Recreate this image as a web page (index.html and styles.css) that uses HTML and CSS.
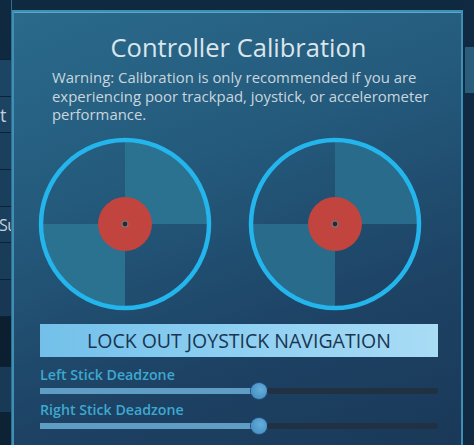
FILE: index.html
```html
<!DOCTYPE html>
<html>
<head>
<meta charset="utf-8">
<link rel="stylesheet" href="styles.css">
</head>
<body>
<div class="screen">
  <div class="side-left">
    <div class="band b0"></div>
    <div class="band b1"></div>
    <div class="band b2"><span class="end">t</span></div>
    <div class="band b3"></div>
    <div class="band b4"></div>
    <div class="band b5"><span class="start">Su</span></div>
    <div class="band b6"></div>
    <div class="band b7"></div>
    <div class="band b8"></div>
    <div class="band b9"></div>
    <div class="band b10"></div>
  </div>
  <div class="dialog">
    <h1 class="title">Controller Calibration</h1>
    <p class="warning">Warning: Calibration is only recommended if you are experiencing poor trackpad, joystick, or accelerometer performance.</p>
    <div class="sticks">
      <svg class="stick" width="176" height="176" viewBox="0 0 176 176">
        <defs><clipPath id="c1"><circle cx="88" cy="88" r="82"/></clipPath></defs>
        <g clip-path="url(#c1)">
          <rect x="88" y="0" width="88" height="88" fill="#2b7290"/>
          <rect x="0" y="88" width="88" height="88" fill="#2b7290"/>
        </g>
        <circle cx="88" cy="88" r="84" fill="none" stroke="#23b5ec" stroke-width="4.5"/>
        <circle cx="88" cy="88" r="27" fill="#c1443f"/>
        <circle cx="88" cy="88" r="3" fill="#2a2a2e" stroke="#7a7a80" stroke-width="1.2"/>
      </svg>
      <svg class="stick" width="176" height="176" viewBox="0 0 176 176">
        <defs><clipPath id="c2"><circle cx="88" cy="88" r="82"/></clipPath></defs>
        <g clip-path="url(#c2)">
          <rect x="88" y="0" width="88" height="88" fill="#286b8a"/>
          <rect x="0" y="88" width="88" height="88" fill="#286b8a"/>
        </g>
        <circle cx="88" cy="88" r="84" fill="none" stroke="#23b5ec" stroke-width="4.5"/>
        <circle cx="88" cy="88" r="27" fill="#c1443f"/>
        <circle cx="88" cy="88" r="3" fill="#2a2a2e" stroke="#7a7a80" stroke-width="1.2"/>
      </svg>
    </div>
    <button class="lock">LOCK OUT JOYSTICK NAVIGATION</button>
    <div class="label">Left Stick Deadzone</div>
    <div class="slider"><div class="fill" style="width:219px"></div><div class="knob"></div><div class="rest"></div></div>
    <div class="label second">Right Stick Deadzone</div>
    <div class="slider"><div class="fill" style="width:219px"></div><div class="knob"></div><div class="rest"></div></div>
  </div>
  <div class="side-right">
    <div class="rblock"></div>
  </div>
</div>
</body>
</html>
```

FILE: styles.css
```css
html, body {
  margin: 0;
  padding: 0;
}
body {
  width: 474px;
  height: 445px;
  overflow: hidden;
  background: #12304a;
  font-family: "Open Sans", "Noto Sans", sans-serif;
}
.screen {
  display: flex;
  width: 474px;
  height: 445px;
  background: linear-gradient(180deg, #0f2a40 0px, #13324d 445px);
}
.side-left {
  width: 12px;
  flex: none;
  display: flex;
  flex-direction: column;
  border-right: 1px solid #2f6f92;
  box-sizing: border-box;
  overflow: hidden;
}
.band {
  flex: none;
  box-sizing: border-box;
  border-bottom: 1px solid #0c2236;
  overflow: hidden;
  color: #c4d2dc;
  font-size: 16px;
  line-height: 36px;
  white-space: nowrap;
}
.b0 { height: 60px; background: #0f2a40; }
.b1 { height: 37px; background: #1c4563; }
.b2 { height: 36px; background: #1c4361; }
.b3 { height: 37px; background: #1a405d; }
.b4 { height: 37px; background: #1a3f5c; }
.b5 { height: 36px; background: #1a3e5b; }
.b6 { height: 37px; background: #193c58; }
.b7 { height: 37px; background: #173754; }
.b8 { height: 50px; background: #0b1f31; }
.b9 { height: 46px; background: #183a56; }
.b10 { height: 40px; background: #0d2235; }
.end { display: block; text-align: right; padding-right: 6px; font-size: 18px; }
.start { display: block; margin-left: -1px; letter-spacing: -0.5px; }

.dialog {
  flex: none;
  width: 451px;
  height: 445px;
  margin-top: 10px;
  box-sizing: border-box;
  border: 2px solid #3f8fb4;
  border-bottom: none;
  box-shadow: inset 0 1px 0 #5aa8c8;
  background: linear-gradient(160deg, #2a6a8b 0%, #245a7c 35%, #1d4264 70%, #1a3858 100%);
  padding: 0 24px 0 26px;
}
.title {
  margin: 18px 0 0;
  font-weight: 400;
  font-size: 25.5px;
  line-height: 34px;
  text-align: center;
  color: #dbe6ec;
}
.warning {
  margin: 4px -10px 0 0;
  padding-left: 12px;
  font-size: 14.9px;
  line-height: 18.5px;
  color: #c9d6de;
}
.sticks {
  display: flex;
  gap: 34px;
  margin-top: 12px;
  margin-left: -3px;
}
.stick { display: block; }
.lock {
  display: block;
  width: 398px;
  height: 33px;
  margin: 12px 0 0;
  border: none;
  padding: 0;
  background: linear-gradient(90deg, #72c0ea 0%, #8fd0f2 50%, #a9dcf5 100%);
  color: #1a3550;
  font-family: "Open Sans", "Noto Sans", sans-serif;
  font-size: 19.5px;
  text-align: center;
}
.label {
  margin-top: 9px;
  font-size: 14.2px;
  line-height: 17px;
  font-weight: 600;
  color: #3ea8d0;
}
.label.second { margin-top: 2px; }
.slider {
  display: flex;
  align-items: center;
  height: 16px;
  width: 398px;
}
.fill {
  height: 6px;
  background: #5f9dc4;
  flex: none;
}
.knob {
  flex: none;
  width: 16px;
  height: 16px;
  margin-left: -8px;
  border-radius: 50%;
  background: radial-gradient(circle at 60% 40%, #64aedb 0%, #4a94c6 70%, #3c80b0 100%);
  box-shadow: 0 0 0 1px #25507a;
}
.rest {
  flex: 1;
  height: 6px;
  background: #1f3142;
  border-radius: 3px;
}
.side-right {
  flex: 1;
  background: #112a44;
  padding-top: 47px;
  padding-left: 2px;
}
.rblock {
  height: 46px;
  background: #2a5c7c;
}
```
